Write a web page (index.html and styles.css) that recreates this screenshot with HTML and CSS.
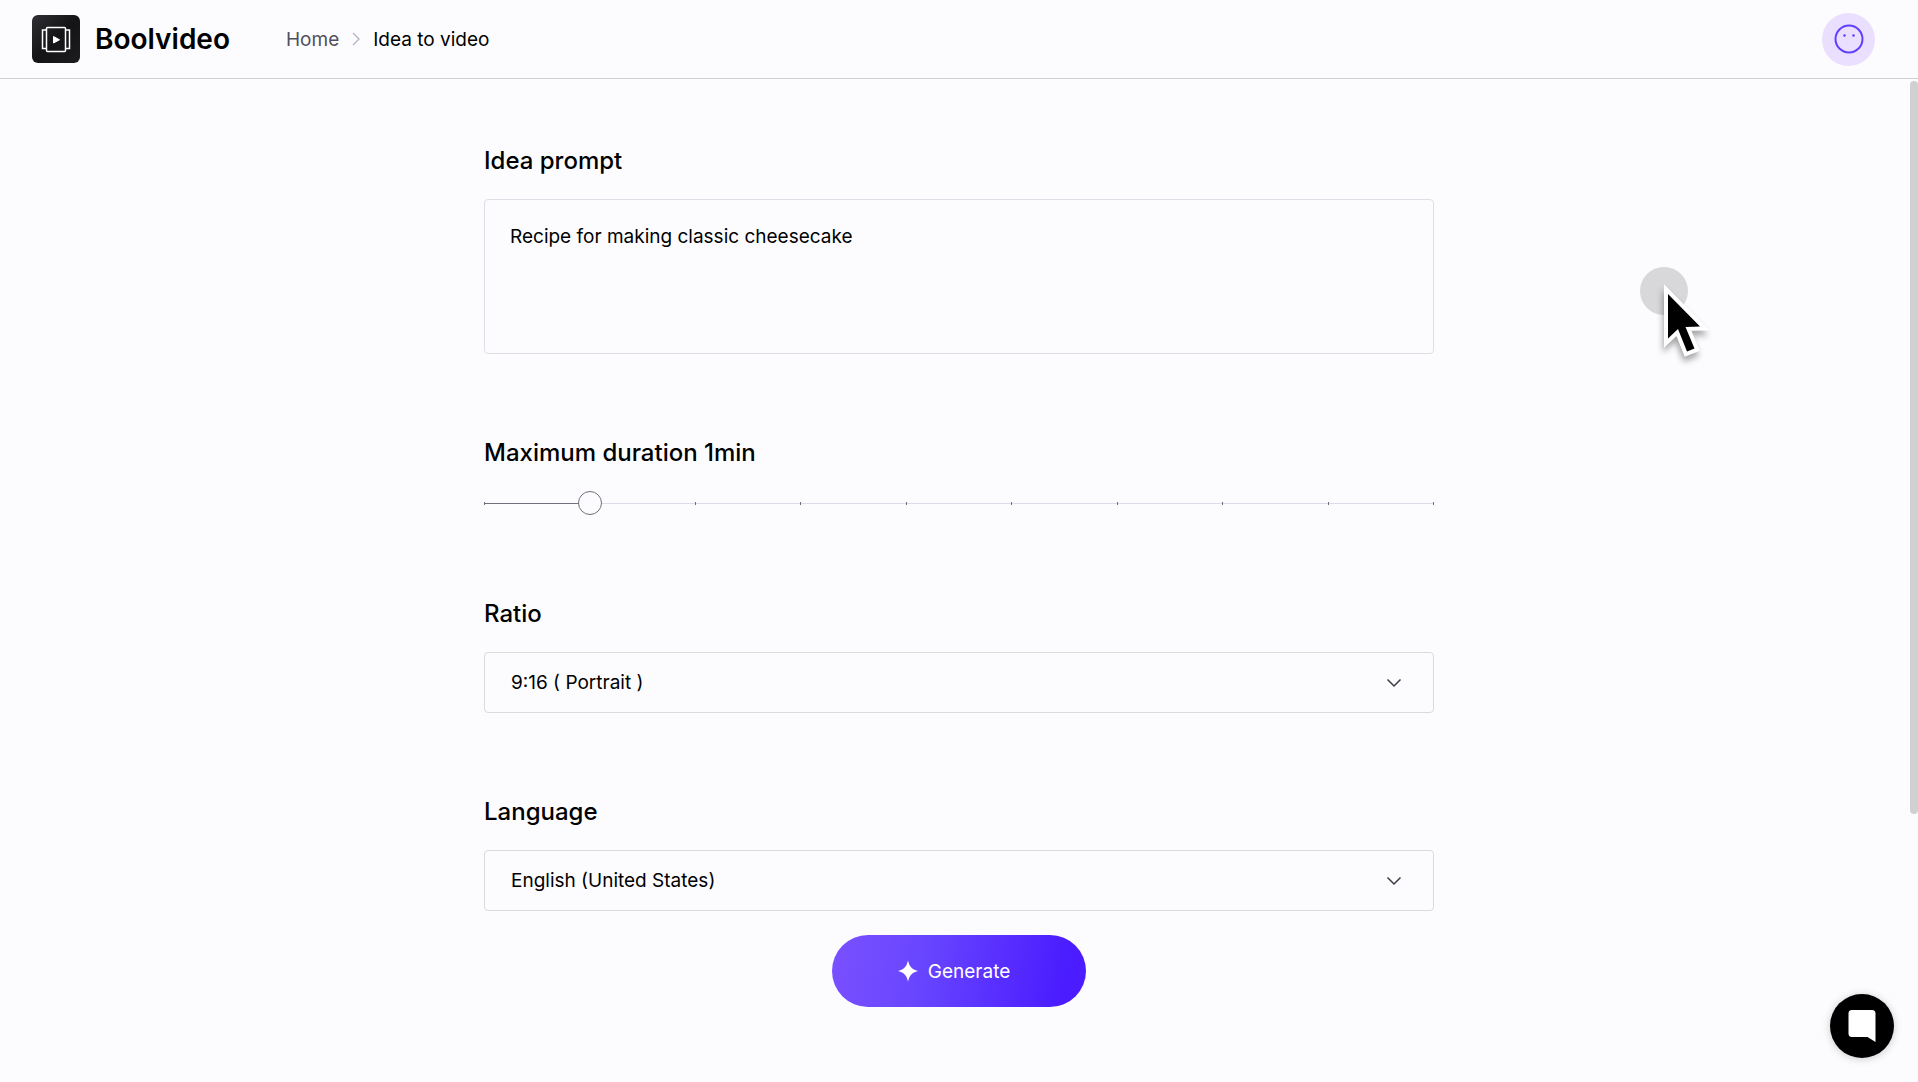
FILE: index.html
```html
<!DOCTYPE html>
<html lang="en">
<head>
  <meta charset="UTF-8" />
  <meta name="viewport" content="width=device-width, initial-scale=1.0"/>
  <title>Idea to video</title>
  <link rel="stylesheet" href="styles.css">
</head>
<body>
  <header class="header">
    <a class="brand" href="#">
      <svg class="brand-logo" width="48" height="48" viewBox="0 0 48 48" aria-hidden="true">
        <defs>
          <linearGradient id="logoFill" x1="0" y1="0" x2="1" y2="1">
            <stop offset="0" stop-color="#303034" />
            <stop offset="0.5" stop-color="#141416" />
            <stop offset="1" stop-color="#1c1c1f" />
          </linearGradient>
        </defs>
        <rect width="48" height="48" rx="6" fill="url(#logoFill)" />
        <g fill="none" stroke="#fff" stroke-width="1.5">
          <rect x="14.5" y="12.5" width="19" height="24" rx="1" />
          <path d="M14.5 15h-4v18.500h4M33.500 15h4v18.500h-4" />
        </g>
        <path d="M21.500 21.500v6.500l6-3.200z" fill="#fff" stroke="#fff" stroke-linejoin="round" />
      </svg>
      <span class="brand-name">Boolvideo</span>
    </a>

    <nav class="breadcrumb" aria-label="Breadcrumb">
      <a class="breadcrumb-link" href="#">Home</a>
      <svg width="8" height="14" viewBox="0 0 8 14" fill="none" stroke="#b4b4c6" stroke-width="1.3" aria-hidden="true">
        <path d="M1 1l6 6-6 6" />
      </svg>
      <span class="breadcrumb-current">Idea to video</span>
    </nav>

    <button class="avatar" type="button" aria-label="Account">
      <svg width="30" height="30" viewBox="0 0 30 30" aria-hidden="true">
        <circle cx="15" cy="15" r="13.500" fill="none" stroke="#6040ff" stroke-width="2" />
        <circle cx="10.500" cy="11.500" r="1.300" fill="#6040ff" />
        <circle cx="19.500" cy="11.500" r="1.300" fill="#6040ff" />
      </svg>
    </button>
  </header>

  <main class="main">
    <form class="form">
      <!-- Idea prompt -->
      <div class="field">
        <label class="field-title" for="prompt">Idea prompt</label>
        <textarea class="prompt" id="prompt">Recipe for making classic cheesecake</textarea>
      </div>

      <!-- Duration slider -->
      <div class="field">
        <label class="field-title" for="duration">Maximum duration 1min</label>
        <div class="slider">
          <div class="slider-track">
            <span class="tick"></span>
            <span class="tick"></span>
            <span class="tick"></span>
            <span class="tick"></span>
            <span class="tick"></span>
            <span class="tick"></span>
            <span class="tick"></span>
            <span class="tick"></span>
            <span class="tick"></span>
            <span class="tick"></span>
          </div>
          <input class="slider-input" type="range" id="duration" min="0" max="9" step="1" value="1" />
        </div>
      </div>

      <!-- Ratio -->
      <div class="field">
        <label class="field-title" for="ratio">Ratio</label>
        <div class="select-box">
          <select class="select" id="ratio">
            <option>9:16 ( Portrait )</option>
          </select>
          <svg class="select-arrow" width="16" height="10" viewBox="0 0 16 10" fill="none" stroke="#3a3a42" stroke-width="1.5" aria-hidden="true">
            <path d="M1.500 1.500L8 8l6.500-6.500" />
          </svg>
        </div>
      </div>

      <!-- Language -->
      <div class="field">
        <label class="field-title" for="language">Language</label>
        <div class="select-box">
          <select class="select" id="language">
            <option>English (United States)</option>
          </select>
          <svg class="select-arrow" width="16" height="10" viewBox="0 0 16 10" fill="none" stroke="#3a3a42" stroke-width="1.5" aria-hidden="true">
            <path d="M1.500 1.500L8 8l6.500-6.500" />
          </svg>
        </div>
      </div>
    </form>

    <button class="generate-btn" type="button">
      <svg width="20" height="22" viewBox="0 0 20 22" fill="#fff" aria-hidden="true">
        <path d="M10 0.500C11.500 6.500 13.500 9.300 20 11C13.500 12.700 11.500 15.500 10 21.500C8.500 15.500 6.500 12.700 0 11C6.500 9.300 8.500 6.500 10 0.500z" />
      </svg>
      Generate
    </button>
  </main>

  <div class="scroll-thumb"></div>

  <button class="chat-btn" type="button" aria-label="Open chat">
    <svg width="28" height="32" viewBox="0 0 28 32" fill="#fff" aria-hidden="true">
      <path d="M4 0h20a3.500 3.500 0 0 1 3.500 3.500V32L19.500 27H4A3.500 3.500 0 0 1 0.500 23.500V3.500A3.500 3.500 0 0 1 4 0z" />
    </svg>
  </button>

  <!-- Mouse pointer with click halo -->
  <svg class="pointer" width="80" height="100" viewBox="0 0 80 100" aria-hidden="true">
    <circle cx="24" cy="24" r="24" fill="#d8d8da" />
    <path class="pointer-arrow" d="M28 27L60 59.500L45.500 60L54.500 81.500L47 84.500L38 62L28 71.500z" fill="#000" stroke="#fff" stroke-width="8" />
  </svg>
</body>
</html>
```

FILE: styles.css
```css
* {
  box-sizing: border-box;
}

body {
  font-family: 'Inter', sans-serif;
  font-size: 19px;
  background-color: #fcfcff;
  color: #000;
  margin: 0;
  min-height: 100vh;
  overflow: hidden;
}

button, select, textarea {
  font: inherit;
  color: inherit;
}

/* Header */
.header {
  display: flex;
  align-items: center;
  height: 79px;
  padding: 0 43px 0 32px;
  border-bottom: 1px solid #d0d0d4;
}

.brand {
  display: flex;
  align-items: center;
  gap: 15px;
  color: #000;
  text-decoration: none;
}

.brand-name {
  font-size: 28px;
  font-weight: 600;
}

.breadcrumb {
  display: flex;
  align-items: center;
  gap: 13px;
  margin-left: 56px;
}

.breadcrumb-link {
  color: #50505c;
  text-decoration: none;
}

.avatar {
  display: flex;
  align-items: center;
  justify-content: center;
  width: 53px;
  height: 53px;
  margin-left: auto;
  padding: 0;
  border: none;
  border-radius: 50%;
  background-color: #ebdfff;
  cursor: pointer;
}

/* Form */
.main {
  display: flex;
  flex-direction: column;
  align-items: center;
  gap: 24px;
  padding: 67px 24px;
}

.form {
  display: flex;
  flex-direction: column;
  gap: 84px;
  width: 100%;
  max-width: 950px;
}

.field {
  display: flex;
  flex-direction: column;
  gap: 23px;
}

.field-title {
  font-size: 24px;
  font-weight: 500;
  line-height: 30px;
}

.prompt {
  display: block;
  width: 100%;
  height: 155px;
  padding: 25px;
  line-height: 24px;
  border: 1px solid #dedee6;
  border-radius: 4px;
  background: transparent;
  outline: none;
  resize: none;
}

/* Slider, the input is wider than the track by half a thumb on each side */
.slider {
  display: grid;
  align-items: center;
  height: 24px;
}

.slider-track,
.slider-input {
  grid-area: 1 / 1;
}

.slider-track {
  display: flex;
  align-items: center;
  justify-content: space-between;
  height: 3px;
  background: linear-gradient(#70707a, #70707a) left center / 11% 1px no-repeat,
              linear-gradient(#dcdce8, #dcdce8) center / 100% 1px no-repeat;
}

.tick {
  width: 1px;
  height: 3px;
  background-color: #6c6c74;
}

.slider-input {
  appearance: none;
  height: 24px;
  margin: 0 -12px;
  background: transparent;
  cursor: pointer;
}

.slider-input::-webkit-slider-thumb {
  appearance: none;
  width: 24px;
  height: 24px;
  border: 1px solid #70707a;
  border-radius: 50%;
  background-color: #fcfcff;
}

/* Drop-downs */
.select-box {
  display: grid;
  align-items: center;
}

.select,
.select-arrow {
  grid-area: 1 / 1;
}

.select {
  appearance: none;
  width: 100%;
  height: 61px;
  padding: 0 64px 0 26px;
  border: 1px solid #dadade;
  border-radius: 4px;
  background: transparent;
  cursor: pointer;
}

.select-arrow {
  justify-self: end;
  margin-right: 32px;
  pointer-events: none;
}

.generate-btn {
  display: flex;
  align-items: center;
  justify-content: center;
  gap: 10px;
  width: 254px;
  height: 72px;
  padding: 0 16px 0 6px;
  border: none;
  border-radius: 36px;
  background: linear-gradient(100deg, #7a50ff 0%, #6846ff 35%, #4a1cff 90%);
  color: #fff;
  cursor: pointer;
}

/* Overlays */
.scroll-thumb {
  position: absolute;
  top: 81px;
  right: 0;
  width: 8px;
  height: 733px;
  border-radius: 4px;
  background-color: #d0d0d2;
}

.chat-btn {
  position: fixed;
  right: 24px;
  bottom: 24px;
  display: flex;
  align-items: center;
  justify-content: center;
  width: 64px;
  height: 64px;
  padding: 0;
  border: none;
  border-radius: 50%;
  background-color: #000;
  box-shadow: 0 1px 8px rgba(0, 0, 0, 0.2);
  cursor: pointer;
}

.pointer {
  position: absolute;
  top: 267px;
  right: 198px;
  pointer-events: none;
}

.pointer-arrow {
  paint-order: stroke;
  filter: drop-shadow(-1px 5px 3px rgba(0, 0, 0, 0.35));
}
```
